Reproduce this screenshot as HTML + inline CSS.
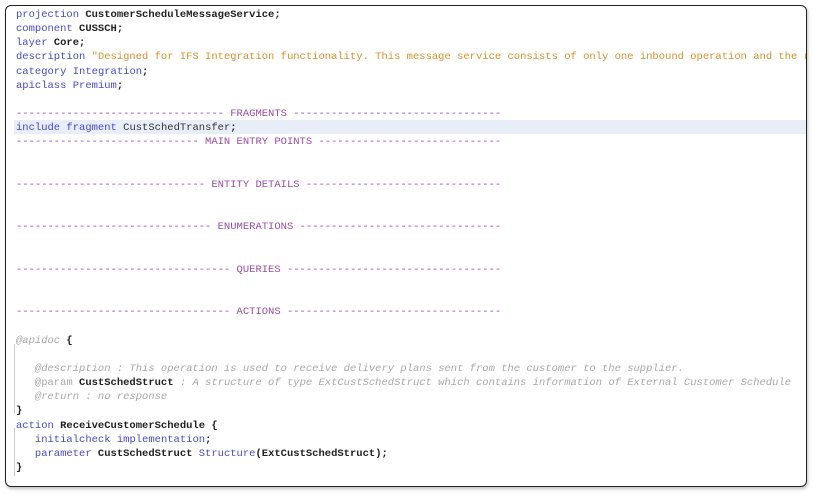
<!DOCTYPE html>
<html><head><meta charset="utf-8"><style>
html,body{margin:0;padding:0;background:#fff;width:814px;height:494px;overflow:hidden}
.box{position:absolute;left:5px;top:5px;width:800px;height:480px;border:1.5px solid #222;border-radius:6px;overflow:hidden;box-shadow:1px 2px 3px rgba(0,0,0,.25)}
pre{position:absolute;left:10px;top:2px;margin:0;font-family:"Liberation Mono",monospace;font-size:10.5px;line-height:14.16px;color:#222;font-weight:bold;white-space:pre}
.hl{position:absolute;left:8px;right:0;top:114px;height:14px;background:#e8eef8}
.k{color:#4848c8;font-weight:normal}
.s{color:#d8902c;font-weight:normal}
.d{color:#9a4aa8;font-weight:normal}
.c{color:#a8a8a8;font-style:italic;font-weight:normal}
.g{position:absolute;left:8px;width:1px;background:#ccc}
</style></head><body>
<div class="box">
<div class="hl"></div>
<div class="g" style="top:338px;height:70px"></div>
<div class="g" style="top:422px;height:48px"></div>
<pre><span class="k">projection</span> CustomerScheduleMessageService;
<span class="k">component</span> CUSSCH;
<span class="k">layer</span> Core;
<span class="k">description</span> <span class="s">"Designed for IFS Integration functionality. This message service consists of only one inbound operation and the request.";</span>
<span class="k">category</span> <span class="k">Integration</span>;
<span class="k">apiclass</span> <span class="k">Premium</span>;

<span class="d">--------------------------------- FRAGMENTS ---------------------------------</span>
<span class="k">include</span> <span class="k">fragment</span> <span class="k" style="color:#333">CustSchedTransfer</span>;
<span class="d">----------------------------- MAIN ENTRY POINTS -----------------------------</span>


<span class="d">------------------------------ ENTITY DETAILS -------------------------------</span>


<span class="d">------------------------------- ENUMERATIONS --------------------------------</span>


<span class="d">---------------------------------- QUERIES ----------------------------------</span>


<span class="d">---------------------------------- ACTIONS ----------------------------------</span>

<span class="c">@apidoc</span> {

   <span class="c">@description : This operation is used to receive delivery plans sent from the customer to the supplier.</span>
   <span class="c" style="font-style:normal">@param</span> CustSchedStruct <span class="c">: A structure of type ExtCustSchedStruct which contains information of External Customer Schedule</span>
   <span class="c">@return : no response</span>
}
<span class="k">action</span> ReceiveCustomerSchedule {
   <span class="k">initialcheck</span> <span class="k">implementation</span>;
   <span class="k">parameter</span> CustSchedStruct <span class="k">Structure</span>(ExtCustSchedStruct);
}</pre>
</div>
</body></html>
